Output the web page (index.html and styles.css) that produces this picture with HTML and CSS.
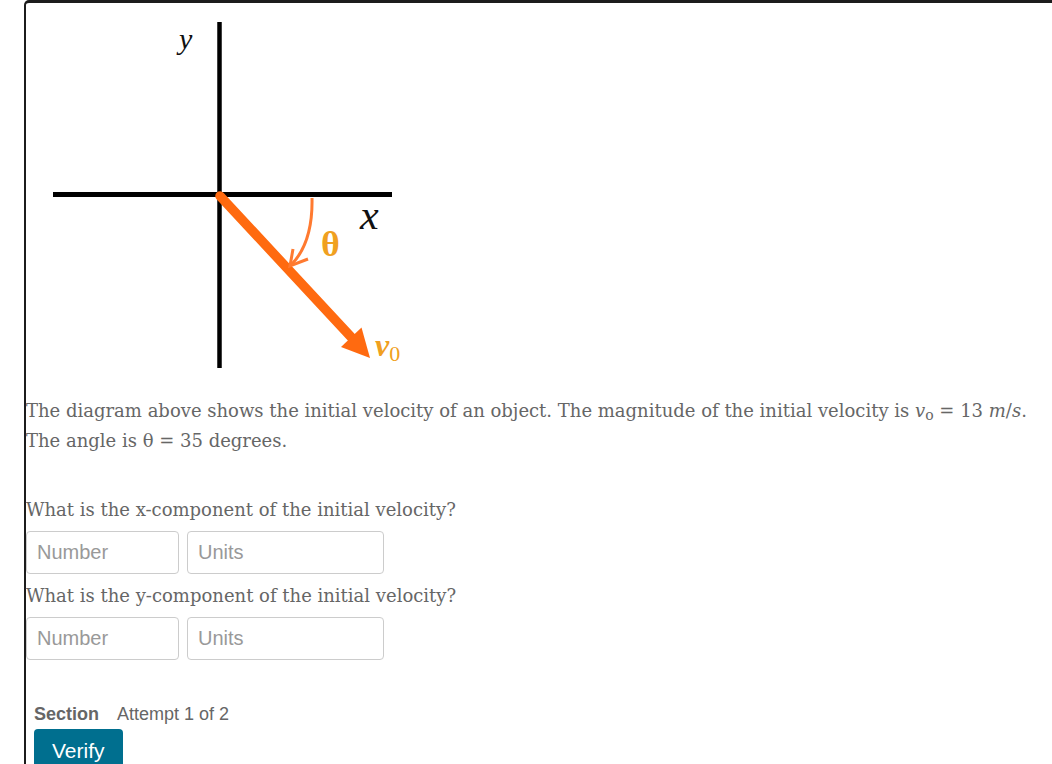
FILE: index.html
```html
<!DOCTYPE html>
<html>
<head>
<meta charset="utf-8">
<link rel="stylesheet" href="styles.css">
</head>
<body>
<div class="panel">
  <svg class="diagram" width="390" height="393" viewBox="26 3 390 393">
    <line x1="219.5" y1="22" x2="219.5" y2="368" stroke="#000" stroke-width="4.5"/>
    <line x1="53" y1="194.5" x2="392" y2="194.5" stroke="#000" stroke-width="5"/>
    <line x1="220" y1="196" x2="352" y2="338" stroke="#ff6a10" stroke-width="9.5" stroke-linecap="round"/>
    <polygon points="370,358 341,347 361.5,327.5" fill="#ff6a10"/>
    <path d="M312,198 Q313,243 291,265" fill="none" stroke="#ff7a30" stroke-width="3"/>
    <path d="M293,249 L290,266 L308,259" fill="none" stroke="#ff7a30" stroke-width="3"/>
    <text x="179" y="49" class="lbl lbl-y">y</text>
    <text x="360" y="229" class="lbl lbl-x">x</text>
    <text x="321" y="256" class="lbl lbl-theta">θ</text>
    <text x="375" y="356" class="lbl lbl-v">v<tspan class="sub" dy="5">0</tspan></text>
  </svg>
  <p class="intro">The diagram above shows the initial velocity of an object. The magnitude of the initial velocity is <i class="math">v</i><sub class="msub">o</sub> = 13 <i class="math">m</i>/<i class="math">s</i>.<br>The angle is θ = 35 degrees.</p>

  <p class="question">What is the x-component of the initial velocity?</p>
  <div class="answer-row">
    <input class="field field-number" type="text" placeholder="Number">
    <input class="field field-units" type="text" placeholder="Units">
  </div>
  <p class="question">What is the y-component of the initial velocity?</p>
  <div class="answer-row">
    <input class="field field-number" type="text" placeholder="Number">
    <input class="field field-units" type="text" placeholder="Units">
  </div>

  <div class="footer">
    <div class="status"><span class="section">Section</span><span class="attempt">Attempt 1 of 2</span></div>
    <button class="verify" type="button">Verify</button>
  </div>
</div>
</body>
</html>
```
FILE: styles.css
```css
html, body {
  margin: 0;
  padding: 0;
  background: #fff;
  overflow: hidden;
}

.panel {
  margin-left: 24px;
  width: 1100px;
  height: 800px;
  border-top: 3px solid #1c1c1c;
  border-left: 2px solid #1c1c1c;
  border-top-left-radius: 5px;
  font-family: "DejaVu Serif", Georgia, serif;
  color: #666;
}

.diagram {
  display: block;
}

.lbl {
  font-family: "Liberation Serif", serif;
  font-style: italic;
}
.lbl-y { font-size: 30px; fill: #111; }
.lbl-x { font-size: 42px; fill: #111; }
.lbl-theta { font-size: 36px; fill: #f0a020; font-style: normal; font-weight: bold; }
.lbl-v { font-size: 32px; fill: #f0a020; font-weight: bold; }
.lbl-v .sub { font-size: 22px; font-style: normal; font-weight: normal; }

.intro {
  margin: 0;
  font-size: 18px;
  line-height: 30px;
}

.math {
  font-style: italic;
}
.msub {
  font-size: 14px;
  vertical-align: -3px;
  line-height: 0;
}

.question {
  margin: 39px 0 0;
  font-size: 18px;
  line-height: 30px;
}
.answer-row + .question {
  margin-top: 0;
}

.answer-row {
  display: flex;
  gap: 8px;
  margin: 6px 0 7px;
}

.field {
  box-sizing: border-box;
  height: 43px;
  border: 1px solid #ccc;
  border-radius: 4px;
  padding: 0 10px;
  font-family: "Liberation Sans", Arial, sans-serif;
  font-size: 20px;
  color: #555;
  background: #fff;
}
.field::placeholder {
  color: #999;
}
.field-number { width: 153px; }
.field-units { width: 197px; }

.footer {
  margin-top: 42px;
  padding-left: 8px;
  font-family: "Liberation Sans", Arial, sans-serif;
}

.status {
  font-size: 18px;
  color: #666;
  line-height: 24px;
}
.section {
  font-weight: bold;
  margin-right: 18px;
}

.verify {
  margin-top: 3px;
  height: 44px;
  padding: 0 18px;
  border: none;
  border-radius: 4px;
  background: #006f8f;
  color: #fff;
  font-family: "Liberation Sans", Arial, sans-serif;
  font-size: 21px;
}
```
